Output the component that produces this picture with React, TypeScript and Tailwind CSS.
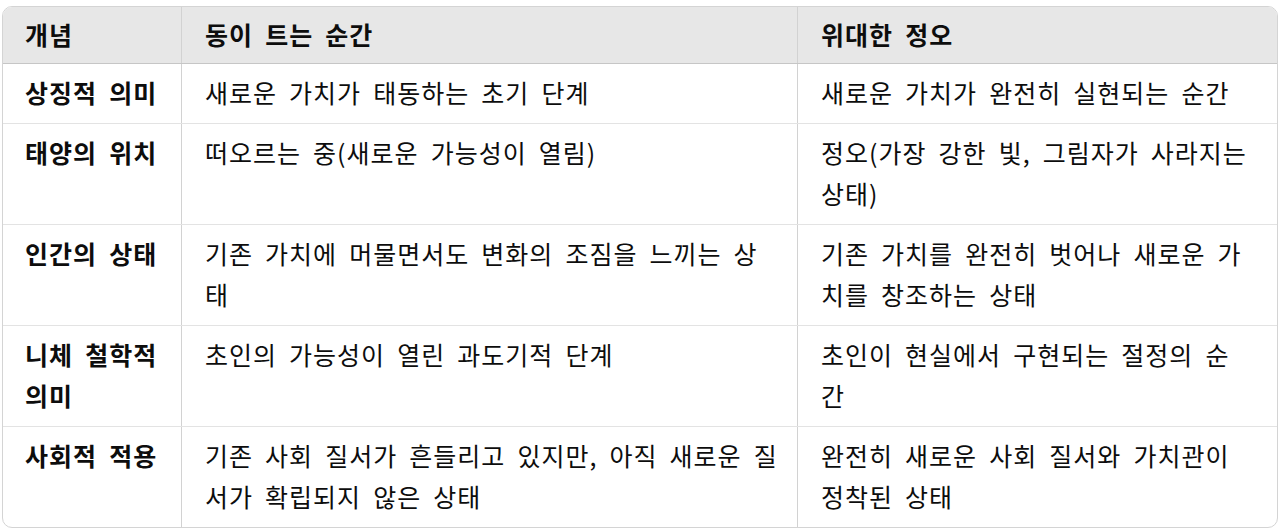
import React from "react";

const rows: [string, string, string][] = [
  ["상징적 의미", "새로운 가치가 태동하는 초기 단계", "새로운 가치가 완전히 실현되는 순간"],
  ["태양의 위치", "떠오르는 중(새로운 가능성이 열림)", "정오(가장 강한 빛, 그림자가 사라지는 상태)"],
  ["인간의 상태", "기존 가치에 머물면서도 변화의 조짐을 느끼는 상태", "기존 가치를 완전히 벗어나 새로운 가치를 창조하는 상태"],
  ["니체 철학적 의미", "초인의 가능성이 열린 과도기적 단계", "초인이 현실에서 구현되는 절정의 순간"],
  ["사회적 적용", "기존 사회 질서가 흔들리고 있지만, 아직 새로운 질서가 확립되지 않은 상태", "완전히 새로운 사회 질서와 가치관이 정착된 상태"],
];

export default function App() {
  return (
    <div
      className="w-[1280px] h-[531px] bg-white pt-[6px] pl-[2px] text-[#0d0d0d] text-[25px] leading-[41px] tracking-[1px] [word-spacing:5.5px]"
      style={{ fontFamily: '"Noto Sans CJK KR", "Noto Sans", sans-serif' }}
    >
      <div className="w-[1276px] border border-[#d4d4d4] rounded-[10px] overflow-hidden">
        <div className="grid grid-cols-[178px_616px_480px] bg-[#e7e7e7] border-b border-[#c6c6c6] font-bold">
          <div className="pl-[22px] pr-[20px] pt-[7px] pb-[8px]">개념</div>
          <div className="border-l border-[#d2d2d2] pl-[23px] pr-[18px] pt-[7px] pb-[8px]">동이 트는 순간</div>
          <div className="border-l border-[#d2d2d2] pl-[23px] pr-[26px] pt-[7px] pb-[8px]">위대한 정오</div>
        </div>
        {rows.map((r, i) => (
          <div
            key={i}
            className={`grid grid-cols-[178px_616px_480px] ${i > 0 ? "border-t border-[#e3e3e3]" : ""}`}
          >
            <div className="pl-[22px] pr-[20px] pt-[8px] pb-[10px] font-bold">{r[0]}</div>
            <div className="border-l border-[#d2d2d2] pl-[23px] pr-[18px] pt-[8px] pb-[10px]">{r[1]}</div>
            <div className="border-l border-[#d2d2d2] pl-[23px] pr-[26px] pt-[8px] pb-[10px]">{r[2]}</div>
          </div>
        ))}
      </div>
    </div>
  );
}
